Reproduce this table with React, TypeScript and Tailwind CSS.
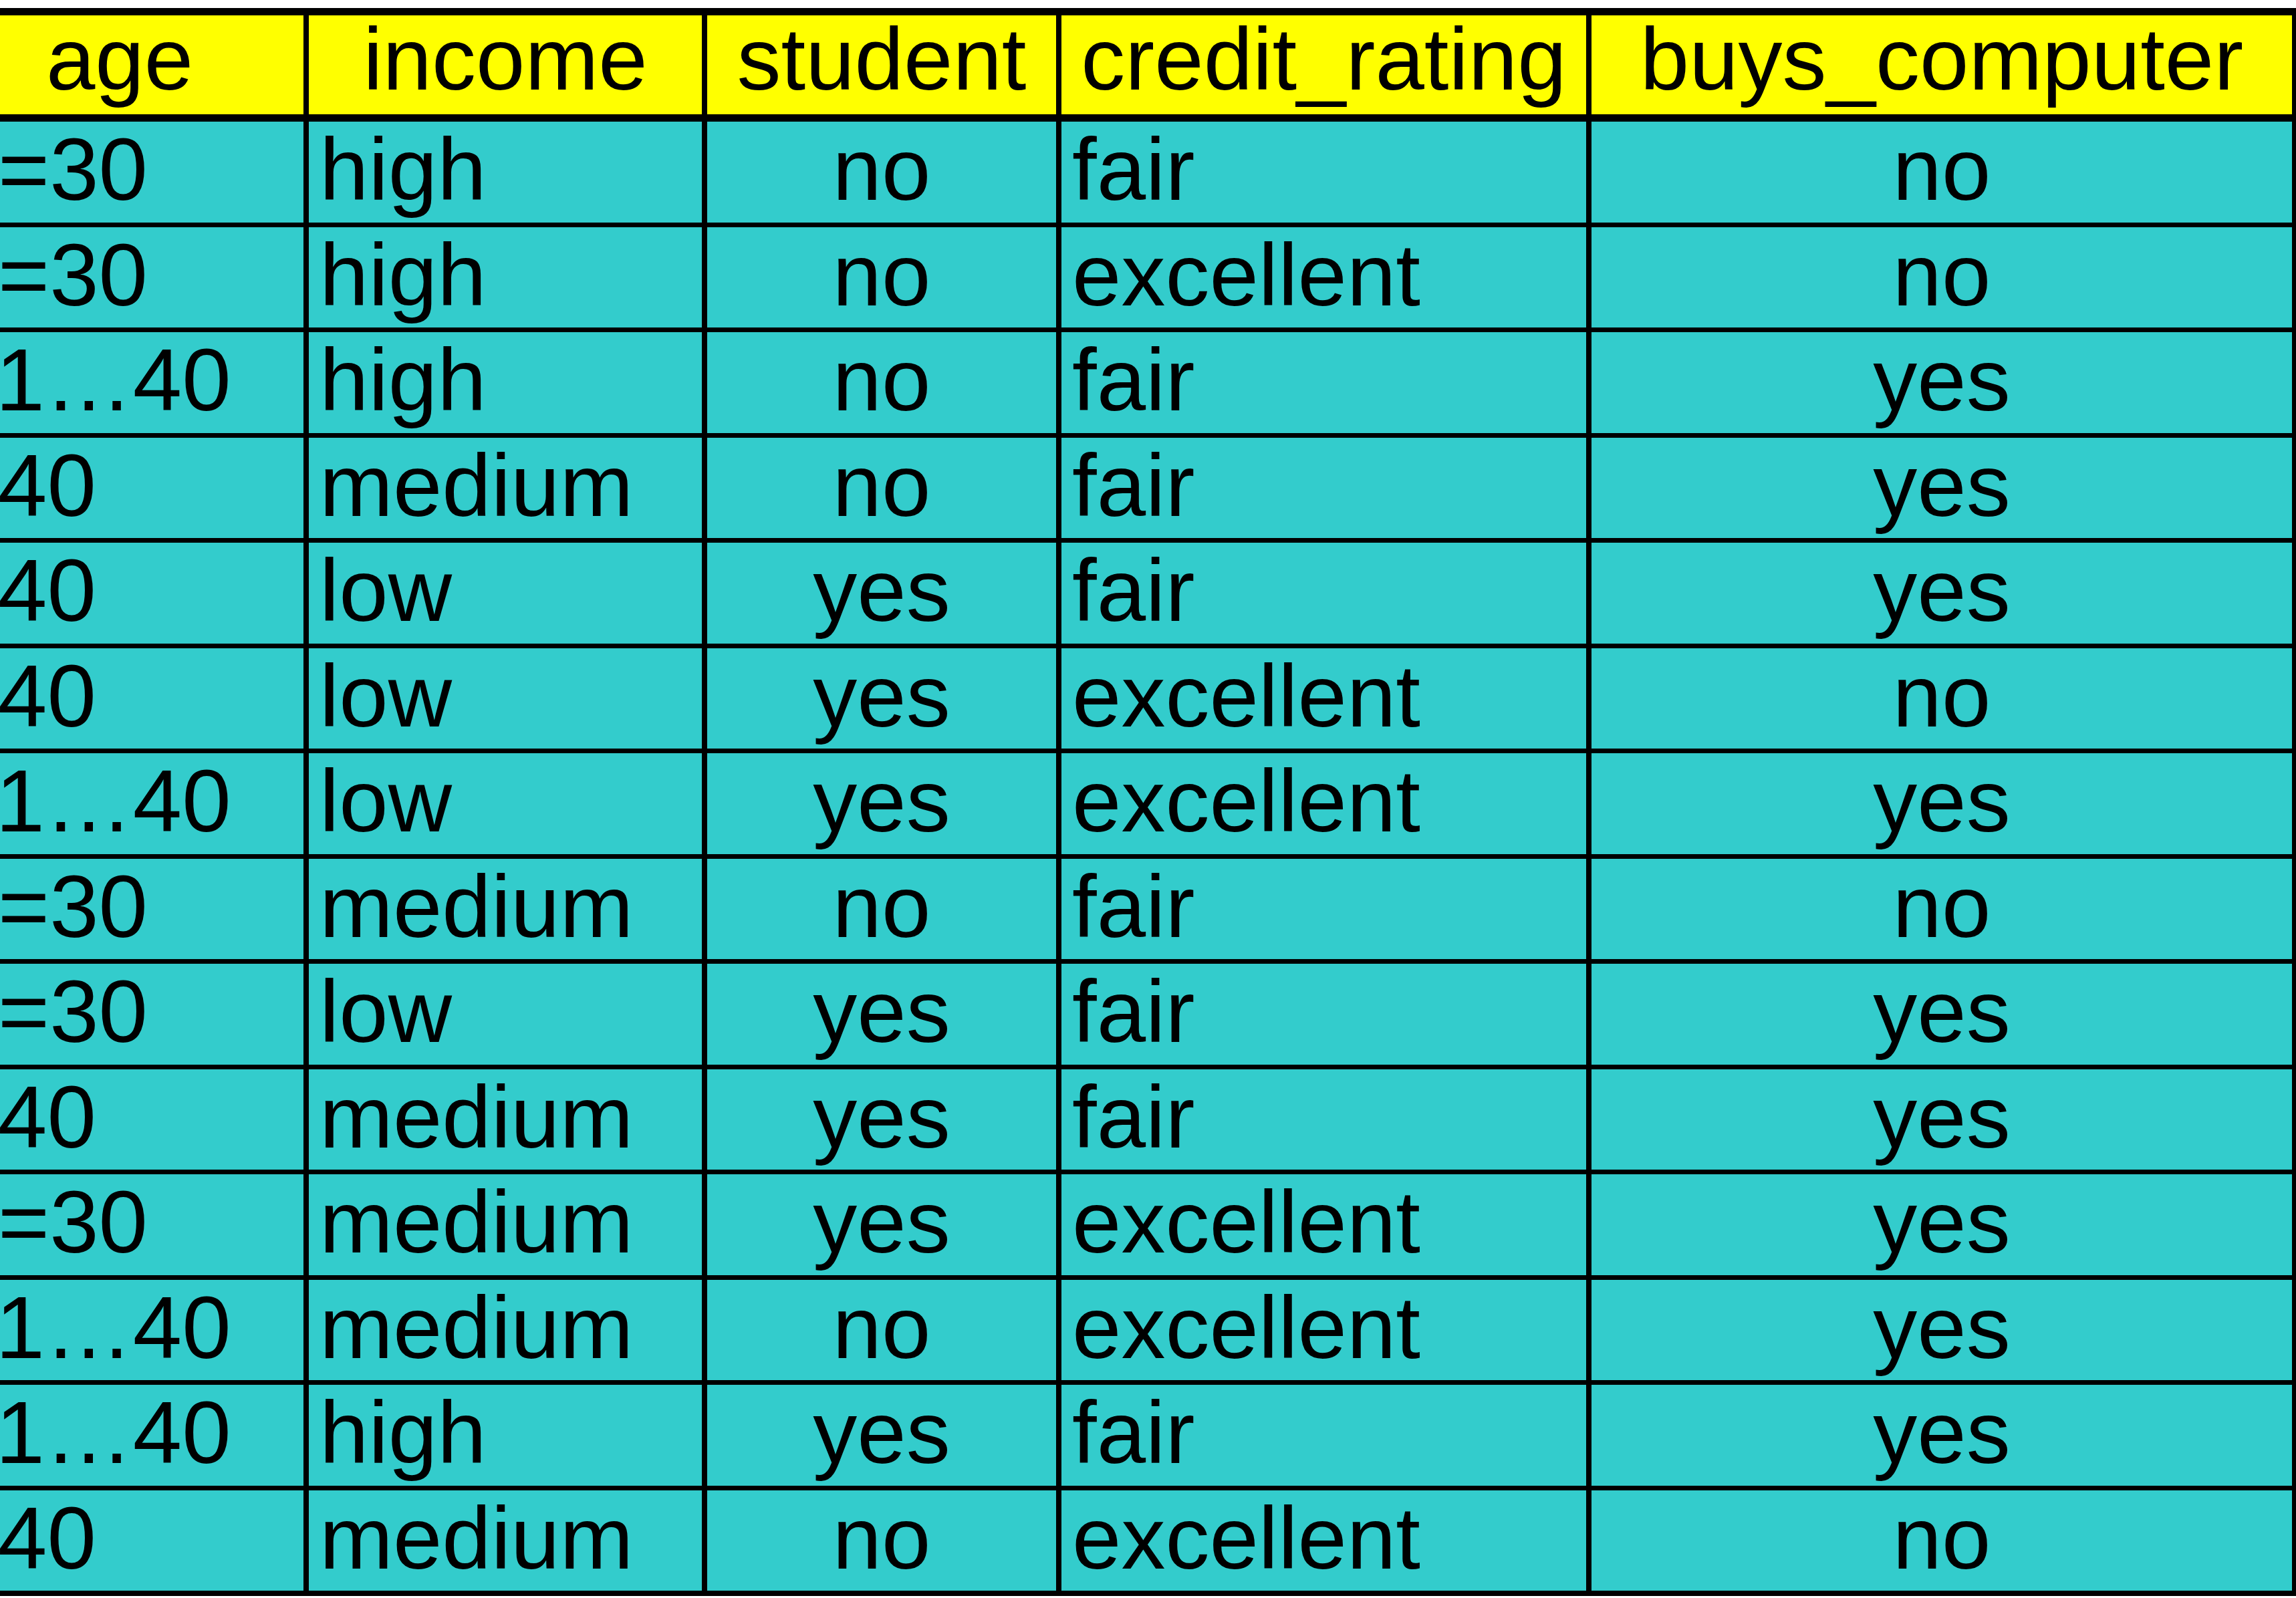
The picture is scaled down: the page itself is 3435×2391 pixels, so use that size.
const header = ['age', 'income', 'student', 'credit_rating', 'buys_computer'];

const rows = [
  ['<=30', 'high', 'no', 'fair', 'no'],
  ['<=30', 'high', 'no', 'excellent', 'no'],
  ['31…40', 'high', 'no', 'fair', 'yes'],
  ['>40', 'medium', 'no', 'fair', 'yes'],
  ['>40', 'low', 'yes', 'fair', 'yes'],
  ['>40', 'low', 'yes', 'excellent', 'no'],
  ['31…40', 'low', 'yes', 'excellent', 'yes'],
  ['<=30', 'medium', 'no', 'fair', 'no'],
  ['<=30', 'low', 'yes', 'fair', 'yes'],
  ['>40', 'medium', 'yes', 'fair', 'yes'],
  ['<=30', 'medium', 'yes', 'excellent', 'yes'],
  ['31…40', 'medium', 'no', 'excellent', 'yes'],
  ['31…40', 'high', 'yes', 'fair', 'yes'],
  ['>40', 'medium', 'no', 'excellent', 'no'],
];

// column widths include the 8px rule on the right; the last column fills the rest
const colClass = [
  'w-[558px] shrink-0 border-r-[8px] border-black',
  'w-[596px] shrink-0 border-r-[8px] border-black',
  'w-[530px] shrink-0 border-r-[8px] border-black',
  'w-[793px] shrink-0 border-r-[8px] border-black',
  'flex-1 min-w-0',
];

// body alignment: age, income and credit_rating are left aligned
const bodyAlign = ['pl-4 text-left', 'pl-4 text-left', 'text-center', 'pl-4 text-left', 'text-center'];

export default function App() {
  return (
    <div className="h-[2391px] w-[3435px] overflow-hidden bg-white pt-[12px] text-black font-['Liberation_Sans',Arial,sans-serif]">
      {/* the table starts off-screen on the left, as in the slide crop */}
      <div className="ml-[-96px] w-[3531px] border-t-[11px] border-r-[6px] border-b-[8px] border-black">
        {/* Header */}
        <div className="flex h-[159px] border-b-[11px] border-black bg-[#ffff00]">
          {header.map((h, i) => (
            <div key={h} className={`${colClass[i]} whitespace-nowrap text-center text-[132px] leading-[132px]`}>
              {h}
            </div>
          ))}
        </div>

        {/* Rows */}
        {rows.map((row, r) => (
          <div
            key={r}
            className={
              r < rows.length - 1
                ? 'flex h-[157.5px] border-b-[7px] border-black bg-[#33cccc]'
                : 'flex h-[150.5px] bg-[#33cccc]'
            }
          >
            {row.map((cell, c) => (
              <div
                key={c}
                className={`${colClass[c]} ${bodyAlign[c]} whitespace-nowrap pt-[6px] text-[132px] leading-[132px]`}
              >
                {cell}
              </div>
            ))}
          </div>
        ))}
      </div>
    </div>
  );
}
